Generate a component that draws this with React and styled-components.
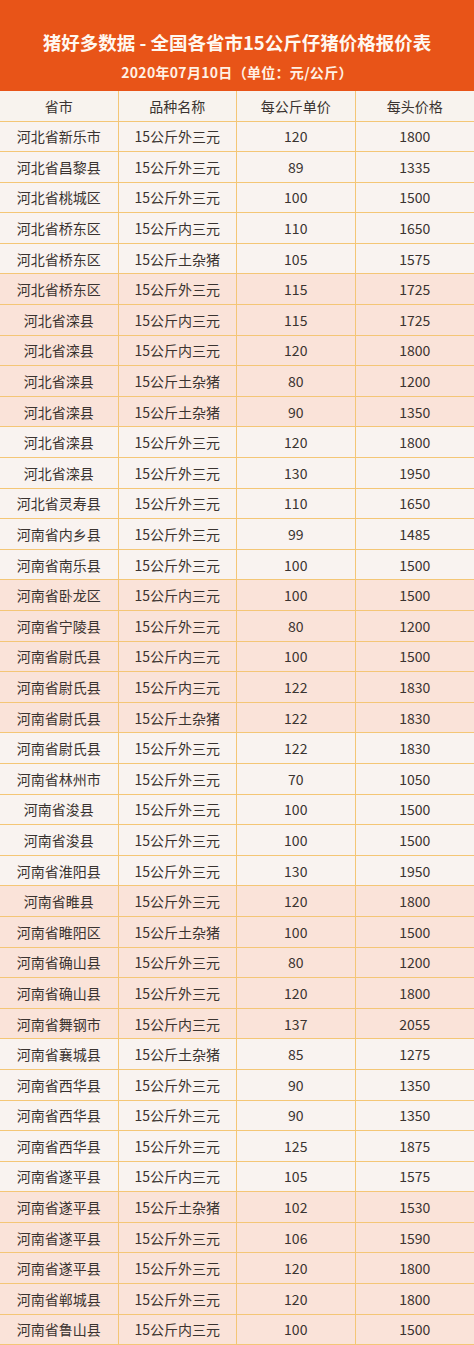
import React from 'react';
import styled, { createGlobalStyle } from 'styled-components';

const GlobalStyle = createGlobalStyle`
  html, body {
    margin: 0;
    padding: 0;
    background: #f9f3f0;
  }
  * {
    box-sizing: border-box;
  }
`;

const Page = styled.div`
  width: 474px;
  font-family: "Noto Sans CJK SC", "Noto Sans", sans-serif;
  color: #3a3330;
`;

const Banner = styled.header`
  height: 91px;
  padding-top: 29px;
  background: #e85418;
  display: flex;
  flex-direction: column;
  align-items: center;
  gap: 7px;
`;

const Title = styled.h1`
  margin: 0;
  font-size: 18.5px;
  line-height: 26px;
  font-weight: 700;
  color: #fff8f0;
  white-space: nowrap;
`;

const Subtitle = styled.div`
  font-size: 14px;
  line-height: 20px;
  font-weight: 700;
  letter-spacing: 0.3px;
  color: #fff1e4;
  white-space: nowrap;
`;

const Table = styled.div`
  display: flex;
  flex-direction: column;
`;

const Row = styled.div`
  display: grid;
  grid-template-columns: repeat(4, 1fr);
  height: ${(p) => (p.$head ? '30.5px' : '30.6px')};
  background: ${(p) => (p.$pink ? '#fae3d9' : p.$head ? '#f8f3ee' : '#f9f3f0')};
  border-bottom: 1px solid #f4c676;
`;

const Cell = styled.div`
  display: flex;
  align-items: center;
  justify-content: center;
  font-size: 14px;
  white-space: nowrap;
  border-right: 1px solid #f4c676;

  &:last-child {
    border-right: none;
  }
`;

const headers = ['省市', '品种名称', '每公斤单价', '每头价格'];

const rows = [
  ['河北省新乐市', '外三元', 120, 1800],
  ['河北省昌黎县', '外三元', 89, 1335],
  ['河北省桃城区', '外三元', 100, 1500],
  ['河北省桥东区', '内三元', 110, 1650],
  ['河北省桥东区', '土杂猪', 105, 1575],
  ['河北省桥东区', '外三元', 115, 1725],
  ['河北省滦县', '内三元', 115, 1725],
  ['河北省滦县', '内三元', 120, 1800],
  ['河北省滦县', '土杂猪', 80, 1200],
  ['河北省滦县', '土杂猪', 90, 1350],
  ['河北省滦县', '外三元', 120, 1800],
  ['河北省滦县', '外三元', 130, 1950],
  ['河北省灵寿县', '外三元', 110, 1650],
  ['河南省内乡县', '外三元', 99, 1485],
  ['河南省南乐县', '外三元', 100, 1500],
  ['河南省卧龙区', '内三元', 100, 1500],
  ['河南省宁陵县', '外三元', 80, 1200],
  ['河南省尉氏县', '内三元', 100, 1500],
  ['河南省尉氏县', '内三元', 122, 1830],
  ['河南省尉氏县', '土杂猪', 122, 1830],
  ['河南省尉氏县', '外三元', 122, 1830],
  ['河南省林州市', '外三元', 70, 1050],
  ['河南省浚县', '外三元', 100, 1500],
  ['河南省浚县', '外三元', 100, 1500],
  ['河南省淮阳县', '外三元', 130, 1950],
  ['河南省睢县', '外三元', 120, 1800],
  ['河南省睢阳区', '土杂猪', 100, 1500],
  ['河南省确山县', '外三元', 80, 1200],
  ['河南省确山县', '外三元', 120, 1800],
  ['河南省舞钢市', '内三元', 137, 2055],
  ['河南省襄城县', '土杂猪', 85, 1275],
  ['河南省西华县', '外三元', 90, 1350],
  ['河南省西华县', '外三元', 90, 1350],
  ['河南省西华县', '外三元', 125, 1875],
  ['河南省遂平县', '内三元', 105, 1575],
  ['河南省遂平县', '土杂猪', 102, 1530],
  ['河南省遂平县', '外三元', 106, 1590],
  ['河南省遂平县', '外三元', 120, 1800],
  ['河南省郸城县', '外三元', 120, 1800],
  ['河南省鲁山县', '内三元', 100, 1500],
];

export default function App() {
  return (
    <>
      <GlobalStyle />
      <Page>
        <Banner>
          <Title>猪好多数据 - 全国各省市15公斤仔猪价格报价表</Title>
          <Subtitle>2020年07月10日（单位：元/公斤）</Subtitle>
        </Banner>
        <Table>
          <Row $head>
            {headers.map((h) => (
              <Cell key={h}>{h}</Cell>
            ))}
          </Row>
          {rows.map(([place, kind, unit, head], i) => (
            // every block of five rows alternates light / pink
            <Row key={i} $pink={Math.floor(i / 5) % 2 === 1}>
              <Cell>{place}</Cell>
              <Cell>15公斤{kind}</Cell>
              <Cell>{unit}</Cell>
              <Cell>{head}</Cell>
            </Row>
          ))}
        </Table>
      </Page>
    </>
  );
}
